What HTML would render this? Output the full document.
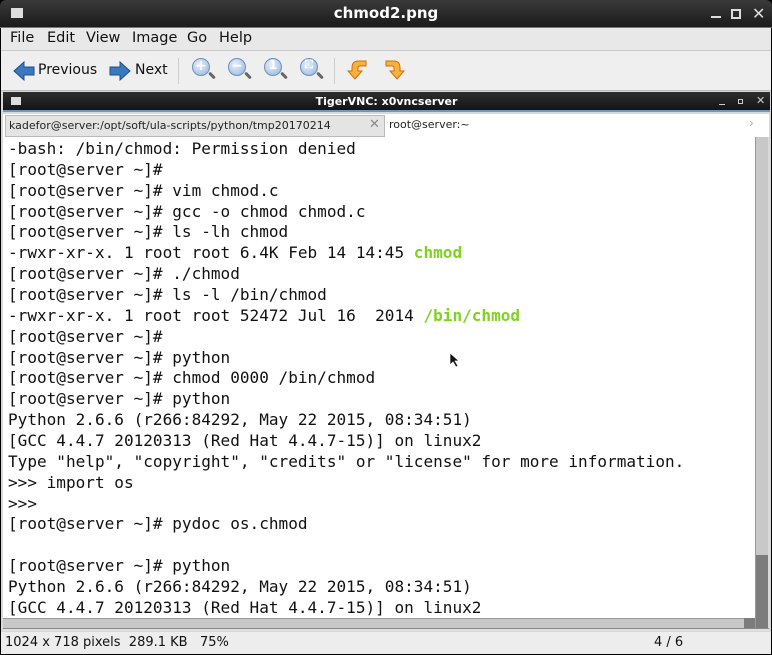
<!DOCTYPE html>
<html><head><meta charset="utf-8"><style>
*{margin:0;padding:0;box-sizing:border-box}
body{width:772px;height:655px;overflow:hidden;background:#000;font-family:"DejaVu Sans","Liberation Sans",sans-serif;position:relative}
.abs{position:absolute}
#tb{left:0;top:0;width:772px;height:28px;background:linear-gradient(#3a3a3a,#1a1a1a);border-radius:6px 6px 0 0;border-bottom:1px solid #5a7ca8}
#title{left:0;width:772px;top:4px;text-align:center;color:#fff;font-weight:bold;font-size:15px}
#menu{left:1px;top:28px;width:770px;height:23px;background:#e8e8e8;border-bottom:1px solid #c8c8c8;font-size:14.5px;color:#111}
#menu span{position:absolute;top:2px}
#tool{left:1px;top:51px;width:770px;height:40px;background:#efefef;border-bottom:1px solid #bbb;font-size:14px;color:#111}
#vnc{left:3px;top:92px;width:767px;height:20px;background:linear-gradient(#2e2e2e,#141414);border-bottom:2px solid #6f96c8}
#tabs{left:3px;top:114px;width:766px;height:23px;background:#fff}
#term{left:3px;top:137px;width:752px;height:491px;background:#fff;overflow:hidden}
pre{font-family:"DejaVu Sans Mono",monospace;font-size:16px;line-height:20.86px;color:#111;position:absolute;left:5px;top:2px;transform:scaleX(1.003);transform-origin:0 0}
.g{color:#7ed321;font-weight:bold}
#status{left:1px;top:632px;width:770px;height:22px;background:#ededed;font-size:13px;color:#111}
.mag{position:absolute;top:7px;width:18px;height:18px;border-radius:50%;background:radial-gradient(circle at 40% 35%,#e8f1fb,#8fb3de);border:1px solid #6c8fb8}
.mag:after{content:"";position:absolute;left:15px;top:15px;width:8px;height:3px;background:#666;transform:rotate(45deg);border-radius:2px}
.mag b{position:absolute;left:0;top:-1px;width:16px;text-align:center;color:#fff;font-size:14px;font-weight:bold}
</style></head><body>
<div id="tb" class="abs">
 <div class="abs" style="left:11px;top:8px;width:12px;height:10px;background:#ddd"></div>
 <div id="title" class="abs">chmod2.png</div>
 <div class="abs" style="left:711px;top:16px;width:10px;height:2px;background:#ddd"></div>
 <div class="abs" style="left:731px;top:9px;width:10px;height:10px;border:2px solid #ddd"></div>
 <div class="abs" style="left:752px;top:4px;color:#ddd;font-size:16px;font-weight:bold">✕</div>
</div>
<div id="menu" class="abs">
 <span style="left:9px">File</span><span style="left:46px">Edit</span><span style="left:85px">View</span><span style="left:131px">Image</span><span style="left:186px">Go</span><span style="left:218px">Help</span>
</div>
<div id="tool" class="abs">
 <svg class="abs" style="left:12px;top:9px" width="22" height="22"><path d="M1 11 L11 2 V7 H21 V15 H11 V20 Z" fill="#3c78c0" stroke="#1f4f8c"/></svg>
 <span class="abs" style="left:37px;top:11px">Previous</span>
 <svg class="abs" style="left:108px;top:9px" width="22" height="22"><path d="M21 11 L11 2 V7 H1 V15 H11 V20 Z" fill="#3c78c0" stroke="#1f4f8c"/></svg>
 <span class="abs" style="left:134px;top:11px">Next</span>
 <div class="abs" style="left:177px;top:7px;width:1px;height:26px;background:#ccc"></div>
 <div class="mag" style="left:191px"><b>+</b></div>
 <div class="mag" style="left:227px"><b>−</b></div>
 <div class="mag" style="left:263px"><b style="font-size:12px">1</b></div>
 <div class="mag" style="left:299px"><b style="font-size:11px">⛶</b></div>
 <div class="abs" style="left:333px;top:7px;width:1px;height:26px;background:#ccc"></div>
 <svg class="abs" style="left:345px;top:7px" width="24" height="24"><path d="M20 3 H12 Q6 3 6 10 V13 H2 L9 21 L16 13 H12 V10 Q12 8 14 8 H20 Z" fill="#f8b040" stroke="#d27000"/></svg>
 <svg class="abs" style="left:381px;top:7px" width="24" height="24"><path d="M4 3 H12 Q18 3 18 10 V13 H22 L15 21 L8 13 H12 V10 Q12 8 10 8 H4 Z" fill="#f8b040" stroke="#d27000"/></svg>
</div>
<div class="abs" style="left:1px;top:91px;width:770px;height:563px;background:#d8d8d8"></div>
<div id="vnc" class="abs">
 <div class="abs" style="left:8px;top:5px;width:10px;height:8px;background:#ddd"></div>
 <div class="abs" style="left:0;width:767px;top:3px;text-align:center;color:#fff;font-weight:bold;font-size:11px">TigerVNC: x0vncserver</div>
 <div class="abs" style="left:716px;top:12px;width:6px;height:1px;background:#ccc"></div>
 <div class="abs" style="left:735px;top:7px;width:5px;height:5px;border:1px solid #ccc"></div>
 <div class="abs" style="left:753px;top:2px;color:#ccc;font-size:11px;font-weight:bold">✕</div>
</div>
<div id="tabs" class="abs">
 <div class="abs" style="left:2px;top:1px;width:380px;height:22px;background:#e4e4e4;border:1px solid #bbb"></div>
 <span class="abs" style="left:6px;top:5px;font-size:11px;color:#222">kadefor@server:/opt/soft/ula-scripts/python/tmp20170214</span>
 <span class="abs" style="left:366px;top:3px;font-size:13px;color:#888;font-weight:bold">✕</span>
 <span class="abs" style="left:386px;top:4px;font-size:11px;color:#222">root@server:~</span>
 <span class="abs" style="left:746px;top:2px;font-size:12px;color:#aaa">›</span>
</div>
<div id="term" class="abs"><pre>-bash: /bin/chmod: Permission denied
[root@server ~]#
[root@server ~]# vim chmod.c
[root@server ~]# gcc -o chmod chmod.c
[root@server ~]# ls -lh chmod
-rwxr-xr-x. 1 root root 6.4K Feb 14 14:45 <span class="g">chmod</span>
[root@server ~]# ./chmod
[root@server ~]# ls -l /bin/chmod
-rwxr-xr-x. 1 root root 52472 Jul 16  2014 <span class="g">/bin/chmod</span>
[root@server ~]#
[root@server ~]# python
[root@server ~]# chmod 0000 /bin/chmod
[root@server ~]# python
Python 2.6.6 (r266:84292, May 22 2015, 08:34:51)
[GCC 4.4.7 20120313 (Red Hat 4.4.7-15)] on linux2
Type "help", "copyright", "credits" or "license" for more information.
&gt;&gt;&gt; import os
&gt;&gt;&gt;
[root@server ~]# pydoc os.chmod

[root@server ~]# python
Python 2.6.6 (r266:84292, May 22 2015, 08:34:51)
[GCC 4.4.7 20120313 (Red Hat 4.4.7-15)] on linux2</pre>
 <svg class="abs" style="left:446px;top:215px" width="10" height="16"><path d="M1 1 V13 L4 10 L7 15 L9 14 L6 9 H10 Z" fill="#111" stroke="#fff" stroke-width=".7"/></svg>
</div>
<div class="abs" style="left:755px;top:137px;width:13px;height:491px;background:#c8c8c8;border-left:1px solid #999"></div>
<div class="abs" style="left:756px;top:555px;width:12px;height:73px;background:#7c7c7c"></div>
<div class="abs" style="left:3px;top:618px;width:752px;height:10px;background:#c8c8c8;border-top:1px solid #999"></div>
<div class="abs" style="left:744px;top:618px;width:11px;height:10px;background:#7c7c7c"></div>
<div class="abs" style="left:3px;top:628px;width:766px;height:3px;background:#e0e0e0;border-top:1px solid #888"></div>
<div id="status" class="abs">
 <span class="abs" style="left:4px;top:3px">1024 x 718 pixels&nbsp; 289.1 KB&nbsp;&nbsp; 75%</span>
 <span class="abs" style="left:653px;top:3px">4 / 6</span>
</div>
</body></html>
